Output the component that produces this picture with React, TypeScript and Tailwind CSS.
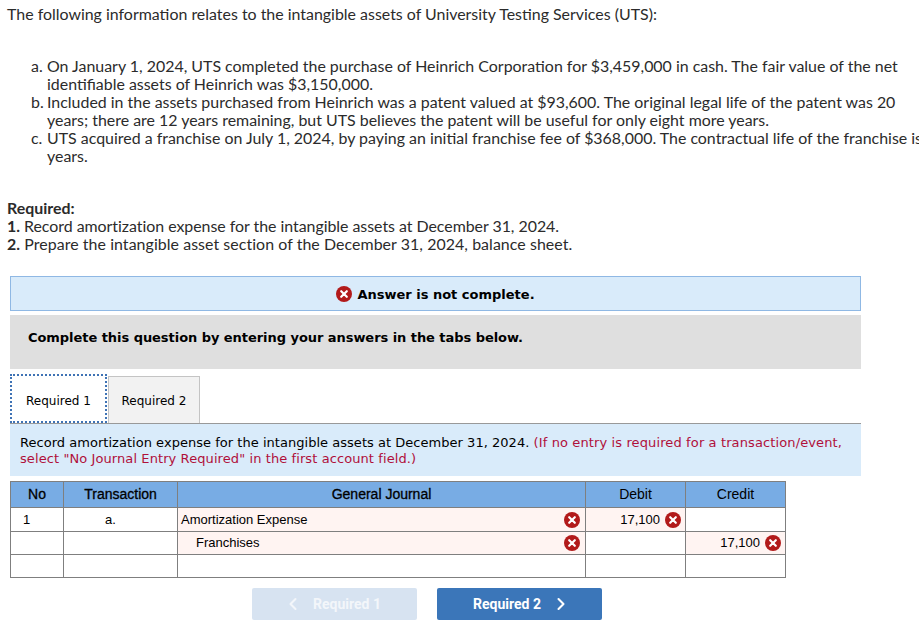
import { ChevronLeft, ChevronRight } from "lucide-react";

const proxima = "font-['Lato','Open_Sans',sans-serif] text-[15.93px] leading-[18px] text-[#2b2b2b]";

function XIcon({ className = "" }: { className?: string }) {
  return (
    <svg viewBox="0 0 16 16" className={`h-4 w-4 shrink-0 ${className}`}>
      <circle cx="8" cy="8" r="8" fill="#b21a1a" />
      <path d="M5.2 5.2l5.6 5.6M10.8 5.2l-5.6 5.6" stroke="#fff" strokeWidth="2.2" strokeLinecap="round" />
    </svg>
  );
}

const items = [
  {
    label: "a.",
    lines: [
      "On January 1, 2024, UTS completed the purchase of Heinrich Corporation for $3,459,000 in cash. The fair value of the net",
      "identifiable assets of Heinrich was $3,150,000.",
    ],
  },
  {
    label: "b.",
    lines: [
      "Included in the assets purchased from Heinrich was a patent valued at $93,600. The original legal life of the patent was 20",
      "years; there are 12 years remaining, but UTS believes the patent will be useful for only eight more years.",
    ],
  },
  {
    label: "c.",
    lines: [
      "UTS acquired a franchise on July 1, 2024, by paying an initial franchise fee of $368,000. The contractual life of the franchise is 10",
      "years.",
    ],
  },
];

const cell = "border border-[#7f7f7f] p-0 align-middle";

export default function App() {
  return (
    <div className="h-[627px] w-[919px] overflow-hidden bg-white">
      <div className={`${proxima} h-[254px] px-[7px] pt-[5px]`}>
        <p>The following information relates to the intangible assets of University Testing Services (UTS):</p>
        <ul className="mt-[34px] pl-[24px]">
          {items.map((item) => (
            <li key={item.label} className="flex">
              <span className="w-[16px] shrink-0">{item.label}</span>
              <div className="whitespace-nowrap">
                {item.lines.map((line) => (
                  <div key={line}>{line}</div>
                ))}
              </div>
            </li>
          ))}
        </ul>
        <p className="mt-[34px] font-bold">Required:</p>
        <p className="tracking-[-0.03px]"><b>1.</b> Record amortization expense for the intangible assets at December 31, 2024.</p>
        <p className="tracking-[0.06px]"><b>2.</b> Prepare the intangible asset section of the December 31, 2024, balance sheet.</p>
      </div>

      <div className="ml-[10px] mt-[22px] w-[851px] font-['DejaVu_Sans',Verdana,sans-serif] text-[13px] text-black">
        <div className="flex h-[35px] items-center justify-center gap-[5px] border border-[#8fb8e4] bg-[#d9ebfa] pt-[2px] font-bold">
          <XIcon className="-mt-[2px]" />
          <span>Answer is not complete.</span>
        </div>
        <div className="mt-[4px] flex h-[54px] items-start bg-[#dfdfdf] px-[18px] pt-[13px] font-bold tracking-[-0.05px]">
          Complete this question by entering your answers in the tabs below.
        </div>
        <div className="mt-[6px] flex h-[49px] items-end border-b border-[#999] text-[12px]">
          <div className="flex h-[49px] w-[97px] items-center justify-center border-2 border-dotted border-[#3f73b5] bg-white pt-[5px]">Required 1</div>
          <div className="ml-[1px] flex h-[47px] w-[92px] items-center justify-center border border-b-0 border-[#c4c4c4] bg-[#f2f2f2] pt-[2px]">Required 2</div>
        </div>
        <div className="flex h-[52px] flex-col justify-center bg-[#d9ebfa] px-[10px] pt-[2px] leading-[16px] tracking-[0.03px]">
          <p>
            Record amortization expense for the intangible assets at December 31, 2024. <span className="tracking-[0.12px] text-[#b0103a]">(If no entry is required for a transaction/event,</span>
          </p>
          <p className="tracking-[0.09px] text-[#b0103a]">select "No Journal Entry Required" in the first account field.)</p>
        </div>
      </div>

      <table className="ml-[10px] mt-[5px] w-[776px] table-fixed border-collapse font-['Liberation_Sans',Arial,sans-serif] text-[13px] text-black">
        <colgroup>
          <col className="w-[53px]" />
          <col className="w-[114px]" />
          <col className="w-[408px]" />
          <col className="w-[100px]" />
          <col className="w-[100px]" />
        </colgroup>
        <thead>
          <tr className="h-[26px] bg-[#78ace4] text-[14px]">
            <th className={`${cell} font-normal [-webkit-text-stroke:0.3px_black]`}>No</th>
            <th className={`${cell} font-normal [-webkit-text-stroke:0.3px_black]`}>Transaction</th>
            <th className={`${cell} font-normal [-webkit-text-stroke:0.3px_black]`}>General Journal</th>
            <th className={`${cell} font-normal`}>Debit</th>
            <th className={`${cell} font-normal`}>Credit</th>
          </tr>
        </thead>
        <tbody>
          <tr className="h-[24px]">
            <td className={`${cell} pl-[12px]`}>1</td>
            <td className={`${cell} pl-[41px]`}>a.</td>
            <td className={`${cell} bg-[#fff4f2] px-[3px]`}>
              <div className="flex items-center justify-between pr-[2px]">
                <span>Amortization Expense</span>
                <XIcon />
              </div>
            </td>
            <td className={`${cell} bg-[#fff4f2] px-[4px]`}>
              <div className="flex items-center justify-end gap-[5px]">
                <span>17,100</span>
                <XIcon />
              </div>
            </td>
            <td className={cell}></td>
          </tr>
          <tr className="h-[23px]">
            <td className={cell}></td>
            <td className={cell}></td>
            <td className={`${cell} bg-[#fff4f2] pl-[18px] pr-[5px]`}>
              <div className="flex items-center justify-between">
                <span>Franchises</span>
                <XIcon />
              </div>
            </td>
            <td className={cell}></td>
            <td className={`${cell} bg-[#fff4f2] px-[4px]`}>
              <div className="flex items-center justify-end gap-[5px]">
                <span>17,100</span>
                <XIcon />
              </div>
            </td>
          </tr>
          <tr className="h-[23px]">
            <td className={cell}></td>
            <td className={cell}></td>
            <td className={cell}></td>
            <td className={cell}></td>
            <td className={cell}></td>
          </tr>
        </tbody>
      </table>

      <div className="ml-[252px] mt-[10px] flex gap-[20px] font-['Roboto',Arial,sans-serif] text-[14px] font-bold text-white">
        <div className="flex h-[32px] w-[165px] items-center gap-[10px] rounded-[2px] bg-[#d7e3f1] pl-[31px] text-[#f3f6fa]">
          <ChevronLeft size={20} strokeWidth={2.5} />
          <span>Required 1</span>
        </div>
        <div className="flex h-[32px] w-[165px] items-center gap-[10px] rounded-[2px] bg-[#3b76b9] pl-[36px]">
          <span>Required 2</span>
          <ChevronRight size={20} strokeWidth={2.5} />
        </div>
      </div>
    </div>
  );
}
